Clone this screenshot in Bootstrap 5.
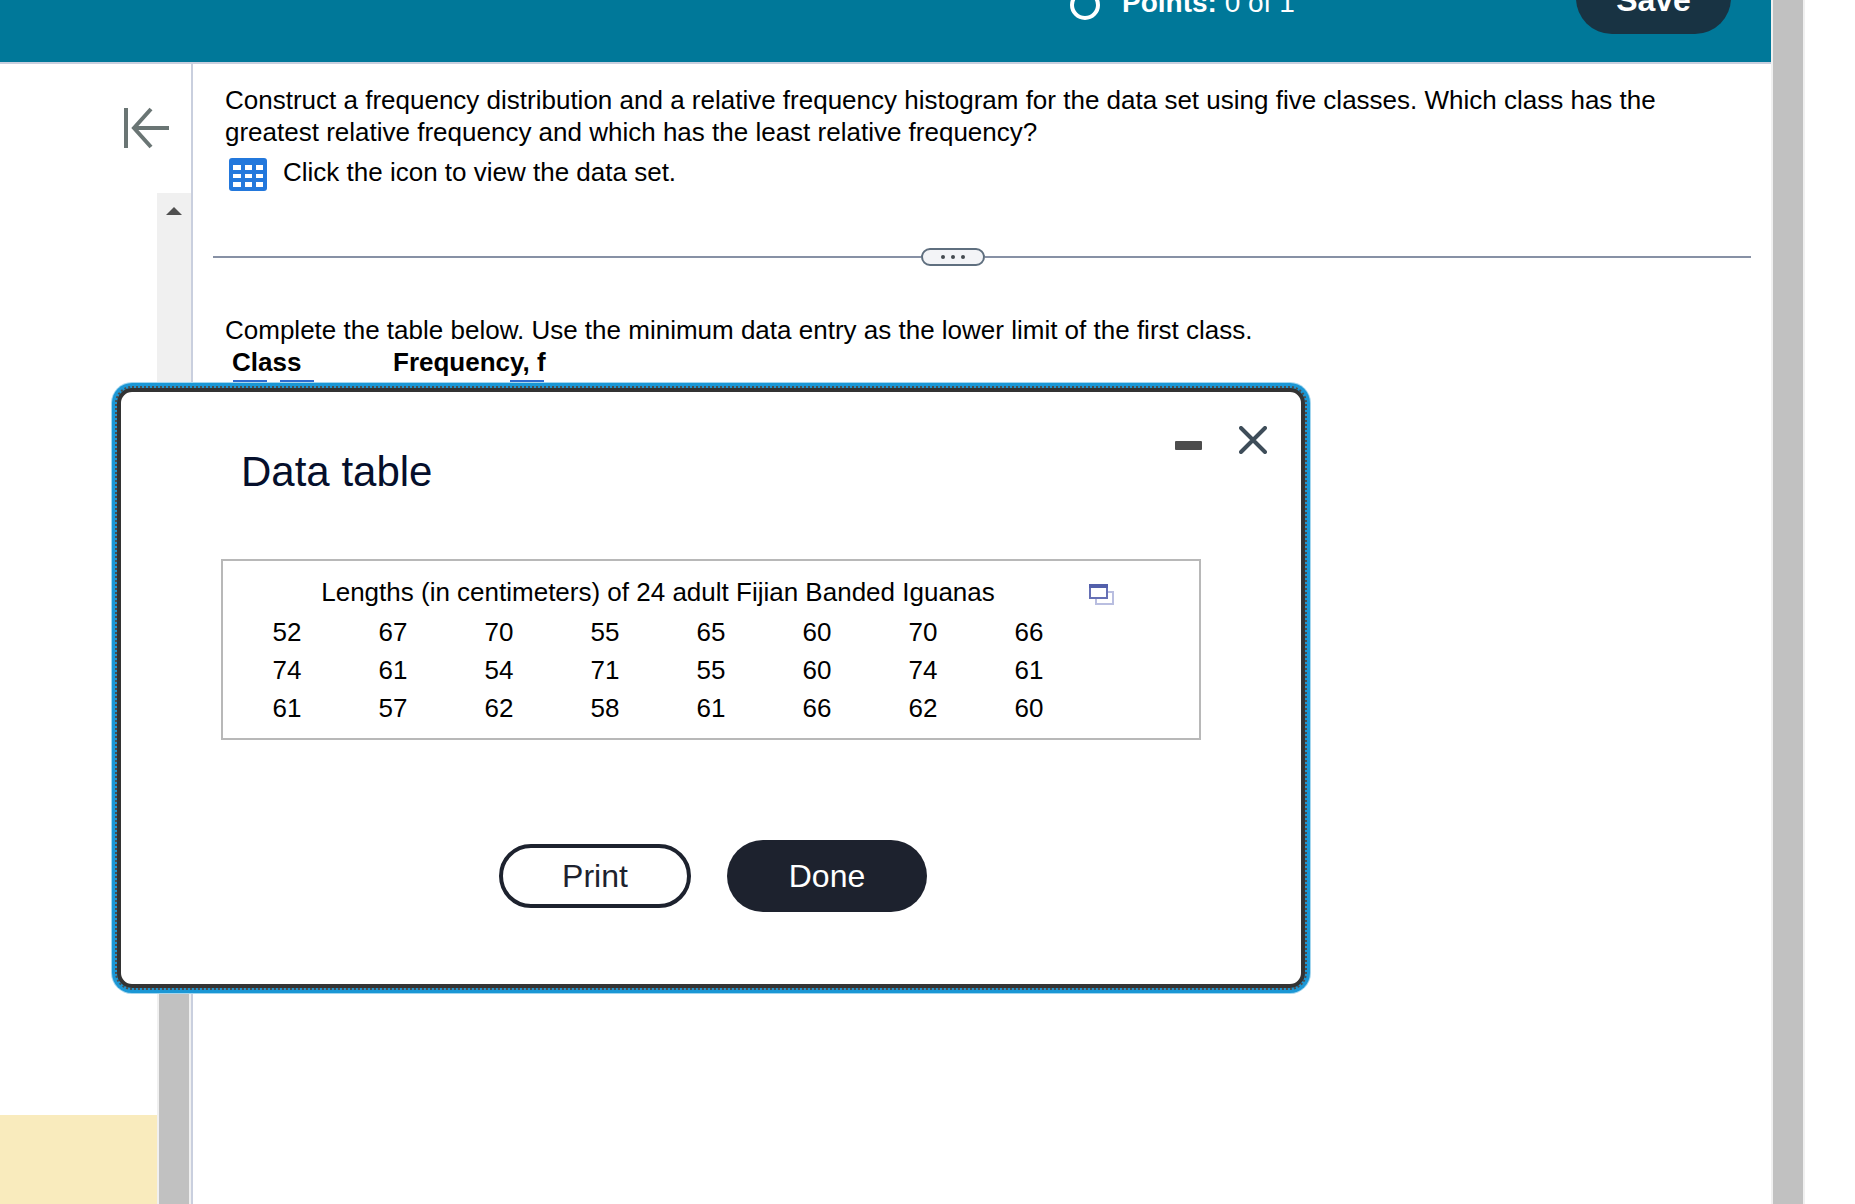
<!DOCTYPE html>
<html lang="en">
<head>
<meta charset="utf-8">
<meta name="viewport" content="width=device-width, initial-scale=1">
<title>Frequency distribution exercise</title>
<link href="https://cdn.jsdelivr.net/npm/bootstrap@5.3.0/dist/css/bootstrap.min.css" rel="stylesheet">
<style>
body{font-family:"Liberation Sans",Arial,sans-serif;font-size:26px;line-height:32px;color:#000;background:#fff}
.topbar{background:#007899;border-bottom:2px solid #c9cfde;height:102px;margin-top:-38px;padding-right:40px;color:#fff}
.score{width:490px;height:82px;gap:22px;font-size:28px}
.save-btn{background:#183343;color:#fff;font-size:32px;line-height:36px;font-weight:700;width:155px;height:72px;border-radius:36px}
.save-btn:hover,.done-btn:hover{background:#2b3a4a;color:#fff}
.side{width:193px;border-right:2px solid #c9cfde}
.side-head{height:129px;padding:42px 20px 0 0}
.note{height:89px;background:#f9ebbd}
.track{width:34px;background:#f0f0f0}
.thumb{width:30px;background:#c1c1c1}
.page-blank{width:50px}
.question{padding:20px 20px 0 32px}
.exercise{padding:48px 20px 0 32px}
.set-link{color:#000;text-decoration:none;gap:16px;padding:8px 0 0 4px}
.set-link svg{margin-top:2px}
.divider{margin:56px 20px 0}
.rule{height:2px;background:#8791a5;flex:13}
.rule-start{flex:12}
.more-btn{width:64px;height:18px;border:2px solid #5f6f7f;border-radius:9px;background:#f3f4f7}
.classes th{padding:0 0 2px 7px;font-weight:700;white-space:nowrap}
.classes td{padding:0 0 0 8px}
.classes input{width:34px;height:32px;border:2px solid #2f6bd0;padding:0}
.col-class{width:161px}
.col-freq{width:162px}
.limits{gap:13px}
.dialog-frame{left:112px;top:383px;width:1198px;padding:3px;border-radius:20px;background:#1b97d5;box-shadow:0 0 0 1px #a5d6ee}
.dialog-ring{border:2px dotted #4d4d4d;border-radius:17px}
.dialog-panel{border:4px solid #333;border-radius:15px;background:#fff;padding:34px 34px 72px 100px}
.dialog-tools{gap:37px}
.dialog-title{font-size:42px;line-height:48px;color:#050f2c;padding-left:20px;margin:-6px 0 63px}
.data-box{border:2px solid #b8b8b8;padding:15px 85px 11px 11px;margin-right:66px}
.data-grid caption{caption-side:top;color:#000;text-align:center;padding:0 0 5px;line-height:32px}
.data-grid{width:848px}
.data-grid td{width:106px;padding:3px 0;text-align:center}
.expand{margin:8px 0 0 7px}
.dialog-actions{margin:100px 66px 0 0;gap:36px;padding-left:4px}
.print-btn,.done-btn{font-size:32px;line-height:36px}
.print-btn{width:192px;height:64px;border:4px solid #1d222e;border-radius:32px;color:#1d222e}
.done-btn{width:200px;height:72px;border-radius:36px;background:#1d222e;color:#fff}
</style>
<script src="https://cdn.jsdelivr.net/npm/bootstrap@5.3.0/dist/js/bootstrap.bundle.min.js"></script>
</head>
<body>
<div class="d-flex vh-100 overflow-hidden position-relative">
  <div class="d-flex flex-column flex-fill">
    <header class="topbar d-flex justify-content-end align-items-start flex-shrink-0">
      <div class="score d-flex align-items-center">
        <svg width="30" height="30" viewBox="0 0 30 30" class="mt-1"><circle cx="15" cy="15" r="13" fill="none" stroke="#fff" stroke-width="4"/></svg>
        <div><strong>Points:</strong> 0 of 1</div>
      </div>
      <button type="button" class="btn save-btn border-0 p-0 pt-1 ms-3">Save</button>
    </header>
    <div class="d-flex flex-fill">
      <aside class="side d-flex flex-column flex-shrink-0">
        <div class="side-head d-flex justify-content-end align-items-start">
          <button type="button" class="btn border-0 p-0 lh-1 d-flex" aria-label="Collapse panel">
            <svg width="48" height="44" viewBox="0 0 48 44" fill="none" stroke="#6a7574" stroke-width="4"><path d="M3 2v40M28 3L11 22l17 19M11 22h35"/></svg>
          </button>
        </div>
        <div class="d-flex flex-fill">
          <div class="flex-fill d-flex align-items-end"><div class="note w-100"></div></div>
          <div class="track d-flex flex-column align-items-center">
            <svg width="16" height="22" viewBox="0 0 16 22"><path d="M0 22L8 14l8 8z" fill="#505050"/></svg>
            <div class="flex-fill"></div>
            <div class="thumb h-50"></div>
          </div>
        </div>
      </aside>
      <main class="flex-fill">
        <div class="question">
          <div>Construct a frequency distribution and a relative frequency histogram for the data set using five classes. Which class has the greatest relative frequency and which has the least relative frequency?</div>
          <a href="#" class="set-link d-flex">
            <svg width="38" height="34" viewBox="0 0 38 34"><rect width="38" height="33" rx="3" fill="#2378dc"/><g fill="#fff"><path d="M4 7h8v5H4zM16 7h7v5h-7zM27 7h7v5h-7zM4 16h8v4H4zM16 16h7v4h-7zM27 16h7v4h-7zM4 24h8v5H4zM16 24h7v5h-7zM27 24h7v5h-7z"/></g></svg>
            <span>Click the icon to view the data set.</span>
          </a>
        </div>
        <div class="divider d-flex align-items-center">
          <div class="rule rule-start"></div>
          <button type="button" class="more-btn p-0 d-flex align-items-center justify-content-center" aria-label="More">
            <svg width="28" height="6" viewBox="0 0 28 6" fill="#454a50"><circle cx="4" cy="3" r="2"/><circle cx="14" cy="3" r="2"/><circle cx="24" cy="3" r="2"/></svg>
          </button>
          <div class="rule"></div>
        </div>
        <div class="exercise">
          <div>Complete the table below. Use the minimum data entry as the lower limit of the first class.</div>
          <table class="classes">
            <thead><tr><th class="col-class">Class</th><th class="col-freq">Frequency, f</th></tr></thead>
            <tbody><tr>
              <td><div class="limits d-flex"><input type="text" aria-label="Lower limit"><input type="text" aria-label="Upper limit"></div></td>
              <td><div class="d-flex justify-content-end pe-1"><input type="text" aria-label="Frequency"></div></td>
            </tr></tbody>
          </table>
        </div>
      </main>
    </div>
  </div>
  <div class="track d-flex justify-content-center flex-shrink-0"><div class="thumb"></div></div>
  <div class="page-blank flex-shrink-0"></div>

  <div class="dialog-frame position-absolute" role="dialog" aria-labelledby="dlg-title">
    <div class="dialog-ring"><div class="dialog-panel">
      <div class="dialog-tools d-flex justify-content-end align-items-center">
        <button type="button" class="btn border-0 p-0 d-flex" aria-label="Minimize"><svg width="27" height="20" viewBox="0 0 27 20"><rect y="11" width="27" height="9" rx="1" fill="#4d4d4d"/></svg></button>
        <button type="button" class="btn border-0 p-0 d-flex" aria-label="Close"><svg width="28" height="28" viewBox="0 0 28 28" stroke="#3e4d59" stroke-width="4" stroke-linecap="round"><path d="M2 2l24 24M26 2L2 26"/></svg></button>
      </div>
      <h2 class="dialog-title fw-normal" id="dlg-title">Data table</h2>
      <div class="data-box d-flex align-items-start justify-content-between">
        <table class="data-grid">
          <caption>Lengths (in centimeters) of 24 adult Fijian Banded Iguanas</caption>
          <tbody>
            <tr><td>52</td><td>67</td><td>70</td><td>55</td><td>65</td><td>60</td><td>70</td><td>66</td></tr>
            <tr><td>74</td><td>61</td><td>54</td><td>71</td><td>55</td><td>60</td><td>74</td><td>61</td></tr>
            <tr><td>61</td><td>57</td><td>62</td><td>58</td><td>61</td><td>66</td><td>62</td><td>60</td></tr>
          </tbody>
        </table>
        <button type="button" class="btn border-0 p-0 d-flex expand" aria-label="Open data in a new window"><svg width="25" height="21" viewBox="0 0 25 21"><path d="M7 14v6h17V8h-6" fill="none" stroke="#b9bee0" stroke-width="2"/><rect x="1" y="1" width="17" height="13" fill="#fff" stroke="#6670b5" stroke-width="2"/><path d="M0 0h19v4H0z" fill="#5360ab"/></svg></button>
      </div>
      <div class="dialog-actions d-flex justify-content-center align-items-center">
        <button type="button" class="btn print-btn p-0">Print</button>
        <button type="button" class="btn done-btn border-0 p-0">Done</button>
      </div>
    </div></div>
  </div>
</div>
</body>
</html>
